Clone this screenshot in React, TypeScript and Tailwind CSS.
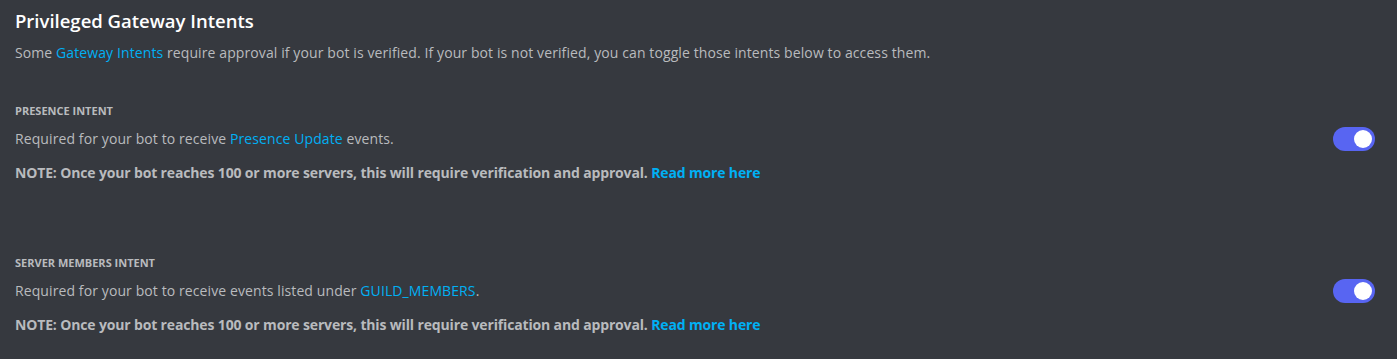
import React from 'react';

function Toggle() {
  return (
    <div className="flex h-6 w-[42px] shrink-0 items-center justify-end rounded-full bg-[#5865f2] px-[3px]">
      <div className="h-[18px] w-[18px] rounded-full bg-white" />
    </div>
  );
}

interface IntentProps {
  title: string;
  lead: string;
  link: string;
  tail: string;
}

function Intent({ title, lead, link, tail }: IntentProps) {
  return (
    <div>
      <div className="text-[11px] font-bold uppercase leading-4 text-[#b9bbbe]">{title}</div>
      <div className="mt-[8px] flex items-center justify-between">
        <div className="text-sm leading-5 tracking-[0.1px] text-[#b9bbbe]">
          {lead}
          <span className="text-[#00b0f4]">{link}</span>
          {tail}
        </div>
        <div className="mr-[7px]">
          <Toggle />
        </div>
      </div>
      <div className="mt-[12px] text-sm font-bold leading-5 tracking-[-0.15px] text-[#b9bbbe]">
        NOTE: Once your bot reaches 100 or more servers, this will require verification and approval.{' '}
        <span className="text-[#00b0f4]">Read more here</span>
      </div>
    </div>
  );
}

export default function App() {
  return (
    <div className="h-[359px] w-full bg-[#36393f] px-[15px] pt-[9px] font-['Open_Sans',sans-serif]">
      <h2 className="text-[18.5px] font-semibold leading-6 text-white">Privileged Gateway Intents</h2>
      <p className="mt-[10px] text-sm leading-5 tracking-[0.1px] text-[#b9bbbe]">
        Some <span className="text-[#00b0f4]">Gateway Intents</span> require approval if your bot is verified. If your
        bot is not verified, you can toggle those intents below to access them.
      </p>
      <div className="mt-[40px] flex flex-col gap-[72px]">
        <Intent
          title="Presence Intent"
          lead="Required for your bot to receive "
          link="Presence Update"
          tail=" events."
        />
        <Intent
          title="Server Members Intent"
          lead="Required for your bot to receive events listed under "
          link="GUILD_MEMBERS"
          tail="."
        />
      </div>
    </div>
  );
}
